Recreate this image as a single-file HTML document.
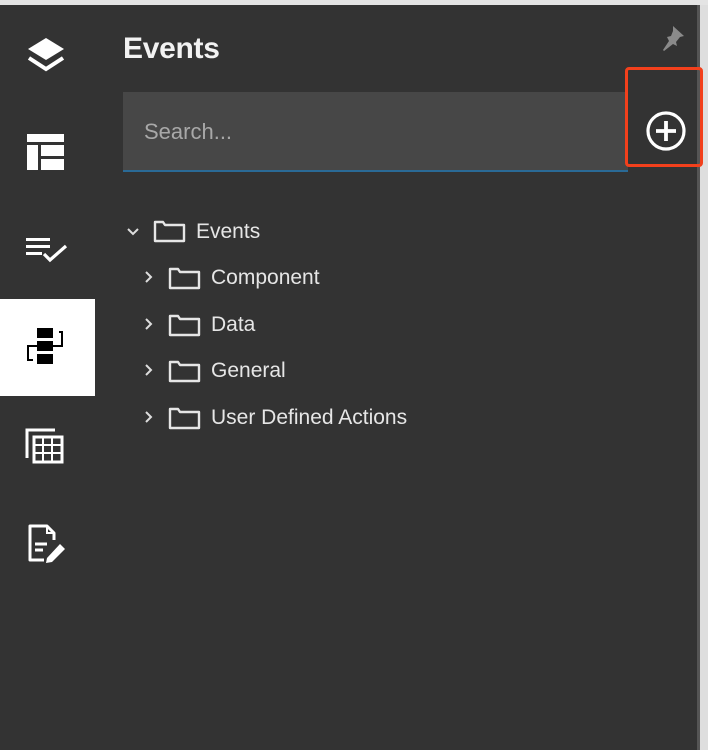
<!DOCTYPE html>
<html><head><meta charset="utf-8"><style>
html,body{margin:0;padding:0;width:708px;height:750px;overflow:hidden;background:#e4e4e4;font-family:"Liberation Sans",sans-serif}
.panel{position:absolute;left:0;top:5px;width:697px;height:745px;background:#333333}
.edge{position:absolute;left:697px;top:5px;width:3px;height:745px;background:#555}
.strip{position:absolute;left:700px;top:5px;width:8px;height:745px;background:#dedede}
.tile{position:absolute;left:0;top:299px;width:95px;height:97px;background:#fff}
.ic{position:absolute}
h1{position:absolute;left:123px;top:32px;margin:0;color:#f2f2f2;font-size:30px;font-weight:bold;letter-spacing:-0.3px}
.search{position:absolute;left:123px;top:92px;width:505px;height:78px;background:#474747;border-bottom:2px solid #2a6a96}
.search span{position:absolute;left:21px;top:27px;color:#a8a8a8;font-size:22px}
.red{position:absolute;left:625px;top:67px;width:72px;height:94px;border:3px solid #f2401c;border-radius:4px}
.row{position:absolute;color:#e6e6e6;font-size:21px;height:24px;line-height:24px}
.row svg{position:absolute;top:0}
</style></head><body>
<div class="panel"></div><div class="edge"></div><div class="strip"></div>
<div class="tile"></div>
<!-- layers -->
<svg class="ic" style="left:25px;top:36px" width="42" height="40" viewBox="0 0 42 40"><path d="M21 2 L39 13 L21 24 L3 13Z" fill="#fff"/><path d="M4 22 L21 33 L38 22" fill="none" stroke="#fff" stroke-width="4"/></svg>
<!-- table layout -->
<svg class="ic" style="left:27px;top:134px" width="37" height="36"><rect x="0" y="0" width="37" height="8" fill="#fff"/><rect x="0" y="11" width="11" height="25" fill="#fff"/><rect x="14" y="11" width="23" height="11" fill="#fff"/><rect x="14" y="25" width="23" height="11" fill="#fff"/></svg>
<!-- list check -->
<svg class="ic" style="left:26px;top:236px" width="42" height="30"><rect x="0" y="2" width="24" height="3" fill="#fff"/><rect x="0" y="9" width="24" height="3" fill="#fff"/><rect x="0" y="16" width="16" height="3" fill="#fff"/><path d="M18 18 L24 24 L40 10" fill="none" stroke="#fff" stroke-width="3.2"/></svg>
<!-- flow -->
<svg class="ic" style="left:25px;top:326px" width="42" height="42"><rect x="12" y="2" width="16" height="10" fill="#000"/><rect x="12" y="15" width="16" height="10" fill="#000"/><rect x="12" y="28" width="16" height="10" fill="#000"/><path d="M28 20 H37 V6 H34" fill="none" stroke="#000" stroke-width="2"/><path d="M12 20 H3 V34 H8" fill="none" stroke="#000" stroke-width="2"/></svg>
<!-- grid -->
<svg class="ic" style="left:25px;top:426px" width="40" height="40"><path d="M2 32 V4 H30" fill="none" stroke="#fff" stroke-width="3"/><rect x="9" y="11" width="28" height="25" fill="none" stroke="#fff" stroke-width="3"/><path d="M9 19 H37 M9 27 H37 M18 11 V36 M27 11 V36" stroke="#fff" stroke-width="2"/></svg>
<!-- doc edit -->
<svg class="ic" style="left:27px;top:524px" width="42" height="40"><path d="M27 16 V9 L20 2 H3 V36 H17" fill="none" stroke="#fff" stroke-width="3" stroke-linejoin="round"/><path d="M20 2 V9 H27" fill="none" stroke="#fff" stroke-width="2"/><path d="M8 20 H20 M8 26 H16" stroke="#fff" stroke-width="3"/><path d="M20 34 L33 20 L38 25 L25 38 L19 39Z" fill="#fff"/></svg>
<h1>Events</h1>
<!-- pin -->
<svg class="ic" style="left:658px;top:24px" width="30" height="28" viewBox="0 0 30 28"><path d="M15 2 L26 12 L22 13 L18 18 L19 22 L15 20 L6 27 L5 26 L11 17 L9 13 L13 12 L15 7Z" fill="#8a8a8a"/></svg>
<div class="search"><span>Search...</span></div>
<div class="red"></div>
<svg class="ic" style="left:645px;top:110px" width="42" height="42"><circle cx="21" cy="21" r="18" fill="none" stroke="#fff" stroke-width="3.2"/><path d="M21 11 V31 M11 21 H31" stroke="#fff" stroke-width="3.8"/></svg>

<div class="row" style="left:125px;top:220px"><svg width="62" height="24"><path d="M3 9 L8 14 L13 9" fill="none" stroke="#ddd" stroke-width="2"/><path d="M30 2 H38 L40 5 H59 V21 H30 Z" fill="none" stroke="#e6e6e6" stroke-width="2.4" stroke-linejoin="round"/></svg><span style="position:absolute;left:71px">Events</span></div>
<div class="row" style="left:140px;top:266px"><svg width="62" height="24"><path d="M6 6 L11 11 L6 16" fill="none" stroke="#ddd" stroke-width="2"/><path d="M30 3 H38 L40 6 H59 V22 H30 Z" fill="none" stroke="#e6e6e6" stroke-width="2.4" stroke-linejoin="round"/></svg><span style="position:absolute;left:71px;white-space:nowrap">Component</span></div>
<div class="row" style="left:140px;top:313px"><svg width="62" height="24"><path d="M6 6 L11 11 L6 16" fill="none" stroke="#ddd" stroke-width="2"/><path d="M30 3 H38 L40 6 H59 V22 H30 Z" fill="none" stroke="#e6e6e6" stroke-width="2.4" stroke-linejoin="round"/></svg><span style="position:absolute;left:71px">Data</span></div>
<div class="row" style="left:140px;top:359px"><svg width="62" height="24"><path d="M6 6 L11 11 L6 16" fill="none" stroke="#ddd" stroke-width="2"/><path d="M30 3 H38 L40 6 H59 V22 H30 Z" fill="none" stroke="#e6e6e6" stroke-width="2.4" stroke-linejoin="round"/></svg><span style="position:absolute;left:71px">General</span></div>
<div class="row" style="left:140px;top:406px"><svg width="62" height="24"><path d="M6 6 L11 11 L6 16" fill="none" stroke="#ddd" stroke-width="2"/><path d="M30 3 H38 L40 6 H59 V22 H30 Z" fill="none" stroke="#e6e6e6" stroke-width="2.4" stroke-linejoin="round"/></svg><span style="position:absolute;left:71px;white-space:nowrap">User Defined Actions</span></div>
</body></html>
